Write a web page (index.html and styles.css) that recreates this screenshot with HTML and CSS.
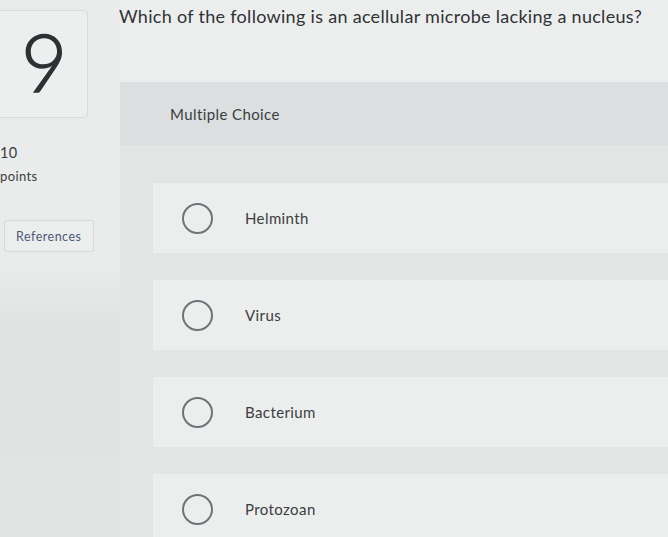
FILE: index.html
```html
<!DOCTYPE html>
<html lang="en">
<head>
<meta charset="utf-8">
<title>Question 9</title>
<link rel="stylesheet" href="styles.css">
</head>
<body>
<div class="page">
  <aside class="side">
    <div class="qnum">9</div>
    <div class="pts">
      <div class="pval">10</div>
      <div class="plabel">points</div>
    </div>
    <button class="refs">References</button>
  </aside>
  <main class="main">
    <h1 class="question">Which of the following is an acellular microbe lacking a nucleus?</h1>
    <div class="type">Multiple Choice</div>
    <ul class="answers">
      <li class="answer"><span class="radio"></span><span class="label">Helminth</span></li>
      <li class="answer"><span class="radio"></span><span class="label">Virus</span></li>
      <li class="answer"><span class="radio"></span><span class="label">Bacterium</span></li>
      <li class="answer"><span class="radio"></span><span class="label">Protozoan</span></li>
    </ul>
  </main>
</div>
</body>
</html>
```
FILE: styles.css
```css
html, body {
  margin: 0;
  padding: 0;
  height: 100%;
  overflow: hidden;
}
body {
  background: #e6e8e8;
  font-family: Lato, "Open Sans", sans-serif;
  color: #3a3d40;
}
.page {
  display: flex;
  height: 537px;
  overflow: hidden;
}
.side {
  width: 120px;
  flex: none;
  display: flex;
  flex-direction: column;
  align-items: flex-start;
  background: linear-gradient(#eaecec 0, #eaecec 260px, #e0e2e2 330px, #e2e4e4 100%);
}
.side > * {
  flex: none;
}
.qnum {
  margin: 10px 0 0 -6px;
  width: 94px;
  height: 108px;
  border: 1px solid #d9dbdb;
  border-radius: 4px;
  background: #edefef;
  box-sizing: border-box;
  font-size: 80px;
  font-weight: 300;
  -webkit-text-stroke: 1.3px #2e3134;
  line-height: 100px;
  padding-left: 26px;
  color: #2e3134;
}
.pts {
  margin-top: 26px;
  color: #3a3d40;
}
.pval {
  font-size: 14.5px;
  line-height: 18px;
  letter-spacing: 0.3px;
}
.plabel {
  font-size: 13px;
  line-height: 16px;
  margin-top: 6px;
  letter-spacing: 0.4px;
}
.refs {
  margin: 36px 0 0 4px;
  width: 90px;
  height: 32px;
  border: 1px solid #d8dada;
  border-radius: 3px;
  background: #eceeee;
  font-family: Lato, sans-serif;
  font-size: 12.5px;
  letter-spacing: 0.5px;
  color: #4b5a78;
  text-align: left;
  padding: 0 0 0 11px;
}
.main {
  flex: 1;
  display: flex;
  flex-direction: column;
  background: linear-gradient(#eceeee 0, #eceeee 82px, #e3e5e5 82px);
}
.main > * {
  flex: none;
}
.question {
  margin: 4px 0 0 -1px;
  font-size: 18px;
  font-weight: 400;
  letter-spacing: 0.3px;
  line-height: 24px;
  color: #2f3235;
  white-space: nowrap;
}
.type {
  margin-top: 54px;
  height: 63px;
  display: flex;
  align-items: center;
  padding-left: 50px;
  background: #dcdfdf;
  font-size: 15px;
  letter-spacing: 0.4px;
  color: #3a3d40;
}
.answers {
  list-style: none;
  margin: 38px 0 0 33px;
  padding: 0;
  display: flex;
  flex-direction: column;
  gap: 27px;
}
.answer {
  height: 70px;
  flex: none;
  display: flex;
  align-items: center;
  background: #eceeee;
  padding-left: 29px;
}
.radio {
  width: 31px;
  height: 31px;
  box-sizing: border-box;
  border: 2px solid #6e7377;
  border-radius: 50%;
  flex: none;
}
.label {
  margin-left: 32px;
  font-size: 15px;
  letter-spacing: 0.4px;
  color: #3a3d40;
}
```
